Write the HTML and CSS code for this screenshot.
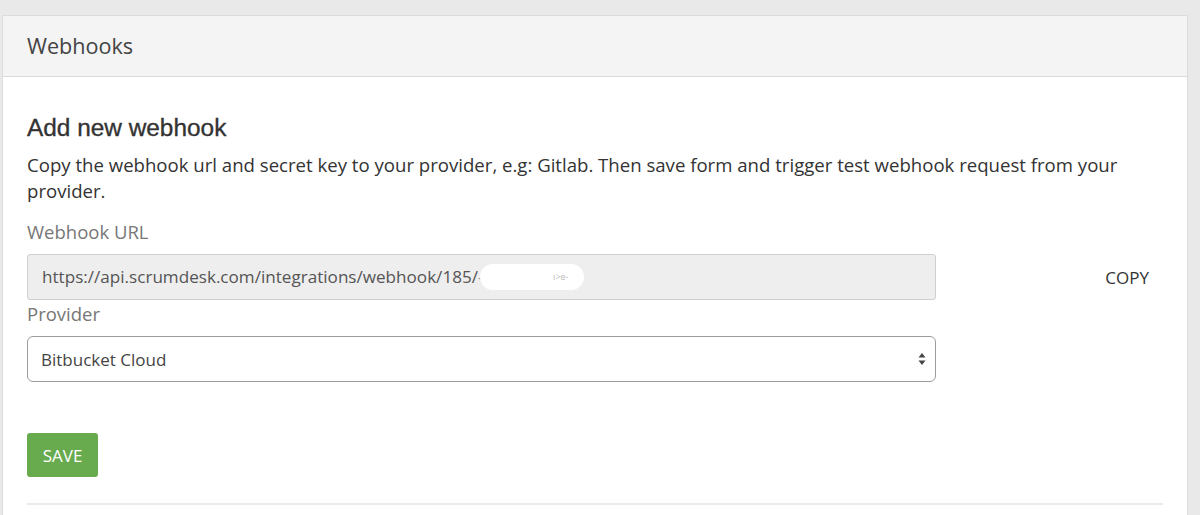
FILE: index.html
```html
<!DOCTYPE html>
<html>
<head>
<meta charset="utf-8">
<link rel="stylesheet" href="styles.css">
</head>
<body>
<div class="panel">
  <div class="panel-head">Webhooks</div>
  <div class="panel-body">
    <h3 class="title">Add new webhook</h3>
    <p class="desc">Copy the webhook url and secret key to your provider, e.g: Gitlab. Then save form and trigger test webhook request from your provider.</p>
    <label class="label">Webhook URL</label>
    <div class="url-row">
      <div class="input ro">https://api.scrumdesk.com/integrations/webhook/185/<span class="mask-a">-</span><span class="mask"><span class="mask-t">ı>e-</span></span></div>
      <button class="copy">COPY</button>
    </div>
    <label class="label provider">Provider</label>
    <div class="select">
      <span>Bitbucket Cloud</span>
      <svg class="arrows" width="8" height="14" viewBox="0 0 8 14"><path d="M4 1 L7.5 5.5 H0.5 Z M4 13 L7.5 8.5 H0.5 Z" fill="#444"/></svg>
    </div>
    <button class="save">SAVE</button>
    <div class="rule"></div>
  </div>
</div>
</body>
</html>
```
FILE: styles.css
```css
html, body { margin: 0; padding: 0; }
body {
  background: #e9e9e9;
  font-family: "Open Sans", "Liberation Sans", sans-serif;
  color: #333;
  height: 515px;
  overflow: hidden;
}
.panel {
  margin: 15px 12px 0 2px;
  border: 1px solid #dcdcdc;
  background: #fff;
  height: 520px;
}
.panel-head {
  height: 60px;
  background: #f4f4f4;
  border-bottom: 1px solid #dadada;
  padding-left: 24px;
  font-size: 21.6px;
  line-height: 60px;
  color: #444;
}
.panel-body {
  padding: 0 24px;
}
.title {
  margin: 0;
  padding-top: 37px;
  font-family: "Liberation Sans", Arial, sans-serif;
  font-weight: normal;
  font-size: 24.4px;
  line-height: 28px;
  color: #333;
  -webkit-text-stroke: 0.35px #333;
}
.desc {
  margin: 10px 0 0;
  font-size: 18.6px;
  line-height: 26px;
  color: #333;
}
.label {
  display: block;
  margin-top: 16px;
  font-size: 18.5px;
  line-height: 24px;
  color: #777;
}
.label.provider { margin-top: 2px; }
.url-row {
  display: flex;
  align-items: center;
  margin-top: 10px;
}
.input {
  width: 909px;
  height: 46px;
  box-sizing: border-box;
  border: 1px solid #cfcfcf;
  border-radius: 3px;
  padding-left: 14px;
  font-size: 17.1px;
  line-height: 44px;
  color: #555;
  white-space: nowrap;
}
.ro { background: #eeeeee; }
.mask-a { color: #999; }
.mask {
  display: inline-block;
  vertical-align: middle;
  width: 104px;
  height: 26px;
  background: #fff;
  border-radius: 13px;
  margin-left: -3px;
  position: relative;
  top: -1px;
  font-size: 9px;
  line-height: 26px;
  text-align: right;
  color: #bbb;
}
.mask-t { padding-right: 16px; }
.copy {
  margin-left: auto;
  margin-right: 14px;
  background: none;
  border: none;
  padding: 0;
  font-family: "Open Sans", sans-serif;
  font-size: 17px;
  color: #333;
}
.select {
  margin-top: 10px;
  width: 909px;
  height: 46px;
  box-sizing: border-box;
  border: 1px solid #9c9c9c;
  border-radius: 6px;
  padding: 0 9px 0 13px;
  display: flex;
  align-items: center;
  justify-content: space-between;
  font-size: 17px;
  color: #444;
}
.save {
  display: block;
  margin-top: 51px;
  width: 71px;
  height: 44px;
  border: none;
  border-radius: 3px;
  background: #68ab4f;
  color: #fff;
  font-family: "Open Sans", sans-serif;
  font-size: 17px;
  padding: 0;
}
.rule {
  margin-top: 26px;
  height: 2px;
  background: #ebebeb;
}
```
